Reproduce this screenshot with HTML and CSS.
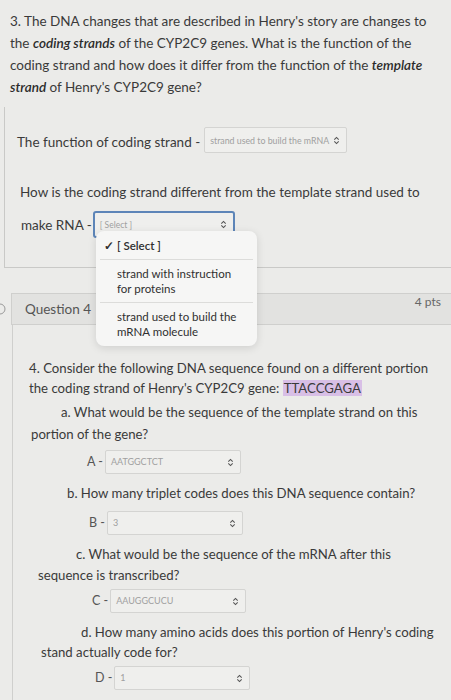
FILE: index.html
```html
<!DOCTYPE html>
<html>
<head>
<meta charset="utf-8">
<link rel="stylesheet" href="styles.css">
</head>
<body>
<div class="page">
  <p class="q3-text">3. The DNA changes that are described in Henry's story are changes to the <em>coding strands</em> of the CYP2C9 genes. What is the function of the coding strand and how does it differ from the function of the <em>template strand</em> of Henry's CYP2C9 gene?</p>
  <div class="q3-answers">
    <div class="row row-1">
      <span>The function of coding strand -</span>
      <span class="sel sel-wide"><span class="sel-val">strand used to build the mRNA</span><svg class="arr" viewBox="0 0 8 10"><path d="M1.5 4 L4 1.5 L6.5 4 M1.5 6 L4 8.5 L6.5 6" fill="none" stroke="#555" stroke-width="1.2"/></svg></span>
    </div>
    <div class="row row-2">How is the coding strand different from the template strand used to</div>
    <div class="row row-3">
      <span>make RNA -</span>
      <span class="sel sel-focus"><span class="sel-val">[ Select ]</span><svg class="arr" viewBox="0 0 8 10"><path d="M1.5 4 L4 1.5 L6.5 4 M1.5 6 L4 8.5 L6.5 6" fill="none" stroke="#555" stroke-width="1.2"/></svg></span>
    </div>
  </div>
  <div class="q4-head">
    <svg class="chev" viewBox="0 0 6 12"><path d="M0 1 A5 5 0 0 1 0 11" fill="none" stroke="#999" stroke-width="1"/></svg>
    <span class="q4-title">Question 4</span>
    <span class="q4-pts">4 pts</span>
  </div>
  <div class="q4-body">
    <p class="q4-intro">4. Consider the following DNA sequence found on a different portion<br>the coding strand of Henry's CYP2C9 gene: <mark class="hl">TTACCGAGA</mark></p>
    <p class="sub sub-a"><span class="ind ind-a">a. What would be the sequence of the template strand on this</span><br>portion of the gene?</p>
    <div class="ans ans-a"><span>A -</span><span class="sel sel-s"><span class="sel-val">AATGGCTCT</span><svg class="arr" viewBox="0 0 8 10"><path d="M1.5 4 L4 1.5 L6.5 4 M1.5 6 L4 8.5 L6.5 6" fill="none" stroke="#555" stroke-width="1.2"/></svg></span></div>
    <p class="sub sub-b">b. How many triplet codes does this DNA sequence contain?</p>
    <div class="ans ans-b"><span>B -</span><span class="sel sel-s"><span class="sel-val">3</span><svg class="arr" viewBox="0 0 8 10"><path d="M1.5 4 L4 1.5 L6.5 4 M1.5 6 L4 8.5 L6.5 6" fill="none" stroke="#555" stroke-width="1.2"/></svg></span></div>
    <p class="sub sub-c"><span class="ind ind-c">c. What would be the sequence of the mRNA after this</span><br>sequence is transcribed?</p>
    <div class="ans ans-c"><span>C -</span><span class="sel sel-s"><span class="sel-val">AAUGGCUCU</span><svg class="arr" viewBox="0 0 8 10"><path d="M1.5 4 L4 1.5 L6.5 4 M1.5 6 L4 8.5 L6.5 6" fill="none" stroke="#555" stroke-width="1.2"/></svg></span></div>
    <p class="sub sub-d"><span class="ind ind-d">d. How many amino acids does this portion of Henry's coding</span><br>stand actually code for?</p>
    <div class="ans ans-d"><span>D -</span><span class="sel sel-s"><span class="sel-val">1</span><svg class="arr" viewBox="0 0 8 10"><path d="M1.5 4 L4 1.5 L6.5 4 M1.5 6 L4 8.5 L6.5 6" fill="none" stroke="#555" stroke-width="1.2"/></svg></span></div>
  </div>
  <div class="menu">
    <div class="mi mi-check"><span class="tick">✓</span>[ Select ]</div>
    <div class="mi">strand with instruction<br>for proteins</div>
    <div class="mi">strand used to build the<br>mRNA molecule</div>
  </div>
</div>
</body>
</html>
```
FILE: styles.css
```css
html, body {
  margin: 0;
  padding: 0;
}
body {
  background: #ebebe9;
  font-family: Lato, "Open Sans", sans-serif;
  color: #3a3a3a;
  width: 451px;
  height: 700px;
  overflow: hidden;
}
.page {
  position: relative;
}
.q3-text {
  margin: 0;
  padding: 10px 10px 0 10px;
  font-size: 13.5px;
  line-height: 22px;
}
.q3-text em {
  font-style: italic;
  font-weight: 600;
  color: #2a2a2a;
}
.q3-answers {
  margin: 9px 0 0 4px;
  height: 161px;
  border-left: 1px solid #c9c9c7;
  border-bottom: 1px solid #c9c9c7;
  font-size: 13.5px;
  box-sizing: border-box;
}
.row {
  display: flex;
  align-items: center;
}
.row-1 {
  padding: 24px 0 0 12px;
  gap: 4px;
}
.row-2 {
  padding: 31px 0 0 15px;
}
.row-3 {
  padding: 11px 0 0 16px;
  gap: 1px;
}
.sel {
  display: inline-flex;
  align-items: center;
  justify-content: space-between;
  border: 1px solid #d4d4d2;
  background: #efefed;
  border-radius: 2px;
  box-sizing: border-box;
  padding: 0 6px 0 5px;
  font-size: 9px;
  color: #a0a0a0;
}
.sel-wide {
  width: 143px;
  height: 26px;
  margin-top: -4px;
  font-size: 8.8px;
}
.sel-focus {
  width: 142px;
  height: 27px;
  border: 2px solid #5d85b8;
  border-radius: 3px;
  font-size: 8.5px;
}
.arr {
  width: 7px;
  height: 9px;
  flex: none;
}
.q4-head {
  margin: 26px 0 0 0;
  height: 30px;
  display: flex;
  align-items: center;
  position: relative;
}
.chev {
  width: 6px;
  height: 12px;
  margin-right: 5px;
}
.q4-title, .q4-pts {
  height: 30px;
  display: flex;
  align-items: center;
  background: #e2e2e0;
  border-top: 1px solid #cfcfcd;
  border-bottom: 1px solid #cfcfcd;
  box-sizing: content-box;
  font-size: 13.5px;
  color: #555;
}
.q4-title {
  flex: 1;
  padding-left: 13px;
  border-left: 1px solid #cfcfcd;
}
.q4-pts {
  padding-right: 10px;
  font-size: 12px;
  color: #666;
  align-items: flex-start;
  padding-top: 0;
  height: 30px;
}
.q4-body {
  margin-left: 12px;
  border-left: 1px solid #cfcfcd;
  padding: 34px 0 30px 0;
  font-size: 13.2px;
  line-height: 20px;
}
.q4-intro {
  margin: 0;
  padding: 0 10px 0 16px;
}
.hl {
  background: #d8bfe6;
  color: #3a3a3a;
  padding: 0 1px;
}
.sub {
  margin: 0;
}
.sub-a {
  padding: 3px 10px 0 18px;
  line-height: 22px;
}
.ind {
  display: inline-block;
}
.ind-a {
  padding-left: 30px;
}
.sub-b {
  padding: 9px 0 0 54px;
}
.sub-c {
  padding: 9px 0 0 25px;
  line-height: 21px;
}
.ind-c {
  padding-left: 38px;
}
.sub-d {
  padding: 9px 0 0 28px;
  line-height: 20px;
}
.ind-d {
  padding-left: 40px;
}
.ans {
  display: flex;
  align-items: center;
  gap: 2px;
  font-size: 12.5px;
  color: #555;
}
.sel-s {
  width: 136px;
  height: 24px;
}
.ans-a {
  padding: 5px 0 0 74px;
}
.ans-b {
  padding: 8px 0 0 76px;
}
.ans-c {
  padding: 3px 0 0 79px;
}
.ans-d {
  padding: 4px 0 0 82px;
}
.menu {
  position: absolute;
  left: 96px;
  top: 231px;
  width: 161px;
  background: #f6f6f5;
  border-radius: 8px;
  box-shadow: 0 2px 8px rgba(0,0,0,0.12);
  font-size: 11.5px;
  line-height: 15.5px;
  color: #2f2f2f;
  padding: 0 4px;
  box-sizing: border-box;
}
.mi {
  padding: 6px 0 5px 17px;
  border-bottom: 1px solid #dcdcda;
}
.mi:last-child {
  border-bottom: none;
  padding-bottom: 6px;
}
.mi-check {
  padding: 7px 0 5px 4px;
  font-weight: 600;
}
.tick {
  display: inline-block;
  width: 13px;
}
```
